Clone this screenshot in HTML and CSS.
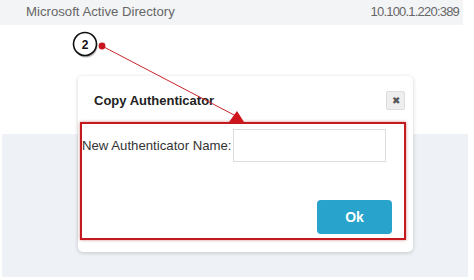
FILE: index.html
```html
<!DOCTYPE html>
<html>
<head>
	<meta charset="utf-8"/>
	<title>Copy Authenticator</title>
	<link rel="stylesheet" href="styles.css">
</head>
<body>
	<div class="page">
		<div class="row">
			<span class="row-name">Microsoft Active Directory</span>
			<span class="row-host">10.100.1.220:389</span>
		</div>
		<div class="gap"></div>
		<div class="backdrop"></div>

		<div class="dialog">
			<div class="dialog-head">
				<b class="dialog-title">Copy Authenticator</b>
				<span class="close">&#10006;</span>
			</div>
			<div class="dialog-body">
				<div class="field">
					<label for="name">New Authenticator Name:</label>
					<input type="text" id="name"/>
				</div>
				<div class="actions">
					<button class="ok">Ok</button>
				</div>
			</div>
		</div>

		<svg class="callout" width="474" height="280" viewBox="0 0 474 280">
			<line x1="102" y1="46" x2="236" y2="116" stroke="#c8262b" stroke-width="1"/>
			<polygon points="244,122 229,122 237,111" fill="#d0141b"/>
			<circle cx="102" cy="46" r="3.4" fill="#c8141b"/>
			<circle cx="86" cy="46" r="11.5" fill="#000" opacity="0.25"/>
			<circle cx="85" cy="44" r="11.5" fill="#fff" stroke="#111" stroke-width="1.6"/>
			<text x="85" y="48.5" text-anchor="middle">2</text>
		</svg>
	</div>
</body>
</html>
```

FILE: styles.css
```css
body {
	margin: 0;
	font-family: "Liberation Sans", Arial, sans-serif;
	background: #fff;
}
.page {
	position: relative;
	width: 474px;
	height: 280px;
	overflow: hidden;
}
.row {
	display: flex;
	justify-content: space-between;
	align-items: center;
	width: 463px;
	height: 25px;
	box-sizing: border-box;
	padding: 0 4px 2px 26px;
	background: #f3f4f6;
	color: #666;
	font-size: 13.2px;
}
.row-host {
	font-size: 13px;
	letter-spacing: -0.8px;
}
.gap {
	height: 109px;
}
.backdrop {
	margin-left: 2px;
	width: 466px;
	height: 143px;
	background: #eef1f5;
}
.dialog {
	position: absolute;
	left: 78px;
	top: 76px;
	width: 335px;
	height: 176px;
	background: #fff;
	border-radius: 5px;
	box-shadow: 0 1px 4px rgba(0, 0, 0, 0.18);
}
.dialog-head {
	display: flex;
	justify-content: space-between;
	align-items: center;
	padding: 10px 8px 0 16px;
	height: 28px;
}
.dialog-title {
	font-size: 13px;
	color: #222;
}
.close {
	width: 17px;
	height: 17px;
	line-height: 17px;
	text-align: center;
	font-size: 10px;
	color: #555;
	background: #eee;
	border: 1px solid #ddd;
	border-radius: 2px;
}
.dialog-body {
	margin: 8px 7px 0 2px;
	height: 114px;
	border: 2px solid #c41a1f;
	box-shadow: 0 0 3px rgba(160, 0, 0, 0.45);
	display: flex;
	flex-direction: column;
	justify-content: space-between;
}
.field {
	display: flex;
	align-items: center;
	padding-top: 5px;
}
.field label {
	font-size: 13.2px;
	color: #333;
}
.field input {
	width: 153px;
	height: 33px;
	box-sizing: border-box;
	border: 1px solid #ddd;
	margin: 0 0 0 1px;
}
.actions {
	display: flex;
	justify-content: flex-end;
	padding: 0 12px 4px 0;
}
.ok {
	width: 75px;
	height: 34px;
	border: 0;
	border-radius: 4px;
	background: #27a3cc;
	color: #fff;
	font-family: inherit;
	font-weight: bold;
	font-size: 14px;
}
.callout {
	position: absolute;
	left: 0;
	top: 0;
}
.callout text {
	font-family: "Liberation Sans", Arial, sans-serif;
	font-size: 12px;
	font-weight: bold;
	fill: #111;
}
```
